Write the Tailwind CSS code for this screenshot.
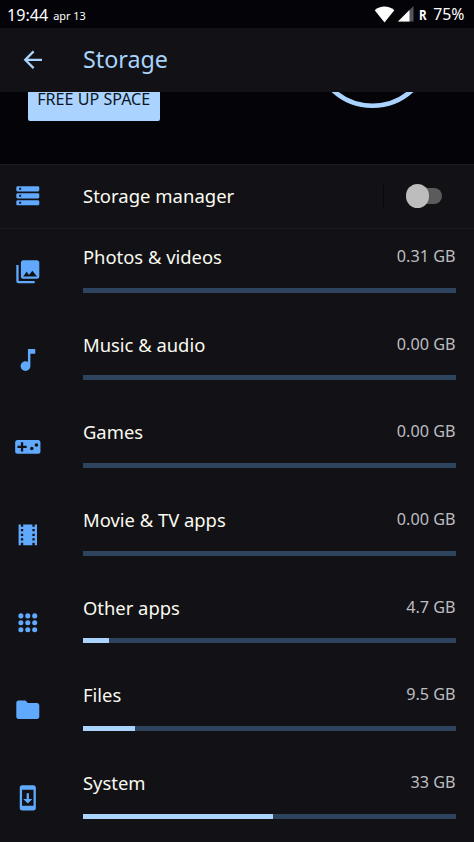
<!DOCTYPE html>
<html lang="en">
<head>
<meta charset="utf-8">
<title>Storage</title>
<script src="https://cdn.jsdelivr.net/npm/@tailwindcss/browser@4"></script>
</head>
<body class="w-[474px] h-[842px] overflow-hidden bg-[#121216] font-['Noto_Sans',sans-serif]">
<div class="flex flex-col w-[474px] h-[842px] overflow-hidden">
  <div class="h-[28px] shrink-0 bg-[#040308] flex items-center pl-[7px] pr-[9.5px] text-white leading-none">
    <span class="text-[16.1px] pt-[2px]">19:44</span>
    <span class="text-[10.9px] ml-[5px] pt-[4px]">apr 13</span>
    <svg class="ml-auto w-[21px] h-[17px] shrink-0" viewBox="0 0 21 17"><path d="M10.5 16.5 0.7 4.2C3.4 1.8 6.8 0.6 10.5 0.6s7.1 1.2 9.8 3.6z" fill="#fff"/></svg>
    <svg class="ml-[3px] w-[16px] h-[16px] shrink-0" viewBox="0 0 16 16"><path d="M0 15.5 15.5 0v15.5z" fill="#55545a"/><path d="M0 15.5 11.5 4v11.5z" fill="#fff"/></svg>
    <span class="ml-[5px] w-[8px] text-[14.5px] font-bold inline-block origin-left scale-x-[0.8]">R</span>
    <span class="ml-[6px] text-[15.8px] pt-[2px]">75%</span>
  </div>
  <header class="h-[64px] shrink-0 bg-[#121216] flex items-center pl-[18.5px]">
    <svg class="w-[27.6px] h-[27.6px]" viewBox="0 0 24 24" fill="#a9d3fb"><path d="M20 11H7.830l5.590-5.590L12 4l-8 8 8 8 1.410-1.410L7.830 13H20v-2z"/></svg>
    <h1 class="ml-[36.9px] text-[23.3px] leading-none text-[#a9d3fb]">Storage</h1>
  </header>
  <section class="h-[72px] shrink-0 bg-[#040308] overflow-hidden flex items-start justify-between pl-[27.5px] pr-[41px]">
    <button class="-mt-[13.5px] h-[42px] w-[132.5px] rounded-[2px] bg-[#aad4ff] text-[#0d1422] text-[16.1px] leading-none whitespace-nowrap">FREE UP SPACE</button>
    <svg class="-mt-[105.5px] w-[121px] h-[121px]" viewBox="0 0 121 121" fill="none"><circle cx="60.5" cy="60.5" r="58.2" stroke="#aad4ff" stroke-width="4.6"/></svg>
  </section>
  <section class="h-[65px] shrink-0 border-y border-[#1c1c20] flex items-center pl-[13.5px] pr-[31.5px] pb-[1.5px]">
    <svg class="w-[27.6px] h-[27.6px] shrink-0" viewBox="0 0 24 24" fill="#60a9fd"><path fill-rule="evenodd" d="M3.200 20.300h17.600c.7 0 1.200-.5 1.200-1.200v-2.100c0-.7-.5-1.200-1.200-1.200H3.200c-.7 0-1.200.5-1.200 1.200v2.100c0 .7.5 1.200 1.200 1.200zM4.500 17.200h1.700v1.700H4.500zM3.200 8.200h17.600c.7 0 1.200-.5 1.200-1.200V4.900c0-.7-.5-1.200-1.200-1.200H3.200c-.7 0-1.200.5-1.200 1.200V7c0 .7.5 1.200 1.200 1.200zM4.500 5.100h1.700v1.700H4.500zM3.200 14.250h17.600c.7 0 1.200-.5 1.200-1.200v-2.100c0-.7-.5-1.200-1.200-1.200H3.200c-.7 0-1.200.5-1.200 1.200v2.100c0 .7.5 1.200 1.200 1.200zM4.500 11.150h1.700v1.700H4.500z"/></svg>
    <h2 class="ml-[41.9px] text-[18.5px] leading-none text-[#fafaf0]">Storage manager</h2>
    <div class="ml-auto w-px h-[24px] bg-[#08080a]"></div>
    <div class="ml-[22px] w-[37px] h-[24px] flex items-center">
      <div class="w-[23.5px] h-[23.5px] shrink-0 rounded-full bg-[#bdbdbd] z-10"></div>
      <div class="-ml-[18px] w-[31px] h-[16.5px] rounded-full bg-[#5b5b5b] shrink-0"></div>
    </div>
  </section>
  <main id="list" class="flex flex-col shrink-0"></main>
</div>

<template id="row">
  <div class="h-[87.7px] shrink-0 flex pl-[13.5px] pr-[18.5px]">
    <svg class="mt-[29px] w-[27.6px] h-[27.6px] shrink-0" viewBox="0 0 24 24" fill="#60a9fd"></svg>
    <div class="ml-[41.900px] flex-1">
      <div class="h-[58.7px] pt-[18px] flex justify-between">
        <span class="text-[18.4px] leading-[20px] text-[#fafaf0]" data-name></span>
        <span class="text-[16.2px] leading-[18px] text-[#bdbdc1]" data-size></span>
      </div>
      <div class="h-[5px] bg-[#2e435e]"><div class="h-full bg-[#aad4fd]" data-bar></div></div>
    </div>
  </div>
</template>
<script>
const rows = [
  ['Photos & videos', '0.31 GB', 0, '<path d="M22 16V4c0-1.100-.9-2-2-2H8c-1.100 0-2 .9-2 2v12c0 1.100.9 2 2 2h12c1.100 0 2-.9 2-2zm-11-4l2.030 2.710L16 11l4 5H8l3-4zM2 6v14c0 1.100.9 2 2 2h14v-2H4V6H2z"/>'],
  ['Music & audio', '0.00 GB', 0, '<path d="M12 3v10.550c-.59-.34-1.270-.55-2-.55-2.210 0-4 1.790-4 4s1.790 4 4 4 4-1.790 4-4V7h4V3h-6z" transform="translate(-.6 -.6) scale(1.060)"/>'],
  ['Games', '0.00 GB', 0, '<path d="M21 6H3c-1.100 0-2 .9-2 2v8c0 1.100.9 2 2 2h18c1.100 0 2-.9 2-2V8c0-1.100-.9-2-2-2zm-10 7H8v3H6v-3H3v-2h3V8h2v3h3v2zm4.500 2c-.83 0-1.500-.67-1.500-1.500s.67-1.500 1.500-1.500 1.500.67 1.500 1.500-.67 1.500-1.500 1.500zm4-3c-.83 0-1.500-.67-1.500-1.500S18.670 9 19.500 9s1.500.67 1.500 1.500-.67 1.500-1.500 1.500z"/>'],
  ['Movie & TV apps', '0.00 GB', 0, '<path d="M18 3v2h-2V3H8v2H6V3H4v18h2v-2h2v2h8v-2h2v2h2V3h-2zM8 17H6v-2h2v2zm0-4H6v-2h2v2zm0-4H6V7h2v2zm10 8h-2v-2h2v2zm0-4h-2v-2h2v2zm0-4h-2V7h2v2z"/>'],
  ['Other apps', '4.7 GB', 7.1, '<circle cx="6" cy="6" r="2.200"/><circle cx="12" cy="6" r="2.200"/><circle cx="18" cy="6" r="2.200"/><circle cx="6" cy="12" r="2.200"/><circle cx="12" cy="12" r="2.200"/><circle cx="18" cy="12" r="2.200"/><circle cx="6" cy="18" r="2.200"/><circle cx="12" cy="18" r="2.200"/><circle cx="18" cy="18" r="2.200"/>'],
  ['Files', '9.5 GB', 14, '<path d="M10 4H4c-1.100 0-1.990.9-1.990 2L2 18c0 1.100.9 2 2 2h16c1.100 0 2-.9 2-2V8c0-1.100-.9-2-2-2h-8l-2-2z"/>'],
  ['System', '33 GB', 51, '<path d="M17 1.010L7 1c-1.100 0-2 .9-2 2v18c0 1.100.9 2 2 2h10c1.100 0 2-.9 2-2V3c0-1.100-.9-1.990-2-1.990zM17 19H7V5h10v14zm-1-6h-3V8h-2v5H8l4 4 4-4z"/>']
];
const list = document.getElementById('list'), tpl = document.getElementById('row');
for (const [name, size, pct, icon] of rows) {
  const r = tpl.content.cloneNode(true);
  r.querySelector('svg').innerHTML = icon;
  r.querySelector('[data-name]').textContent = name;
  r.querySelector('[data-size]').textContent = size;
  r.querySelector('[data-bar]').style.width = pct + '%';
  list.appendChild(r);
}
</script>
</body>
</html>
